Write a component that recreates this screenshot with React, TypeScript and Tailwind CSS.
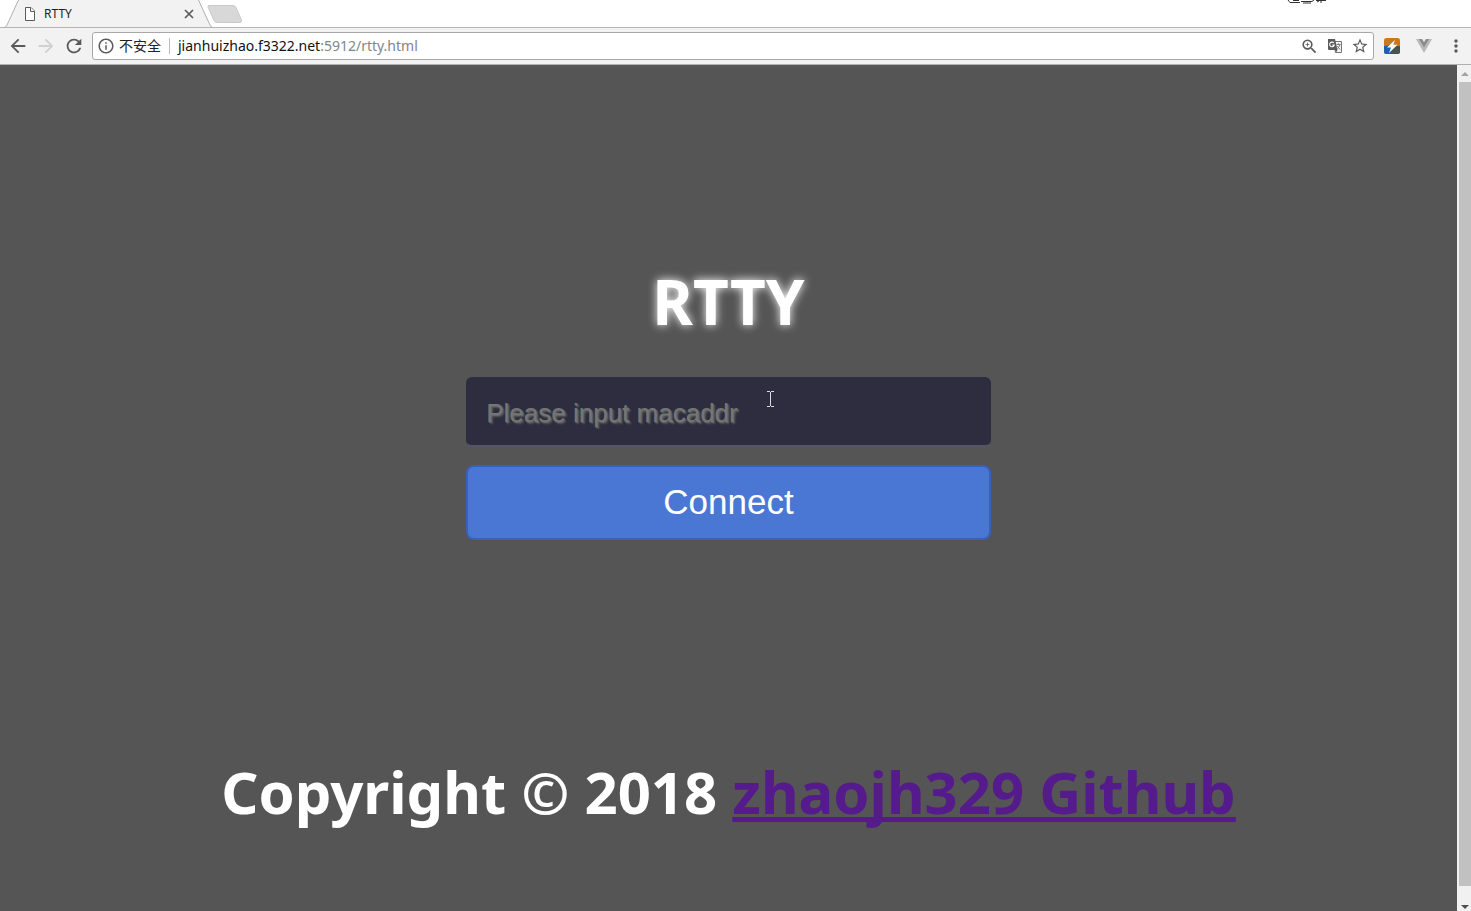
import { useState } from "react";
import {
  MdArrowBack,
  MdArrowForward,
  MdInfoOutline,
  MdMoreVert,
  MdRefresh,
  MdStarBorder,
  MdZoomIn,
} from "react-icons/md";

function TabStrip() {
  return (
    <div className="relative flex h-7 items-end overflow-hidden border-b border-[#b6b4b6] bg-white pl-1">
      {/* active tab, sits over the strip's bottom border */}
      <div className="-mb-px flex h-7">
        <svg className="h-7 w-4" viewBox="0 0 16 28">
          <path d="M0 28V27.500Q2 27 3 25L14 1L16 0V28Z" fill="#f2f2f2" />
          <path d="M0 27.500Q2 27 3 25L14 1L16 -1" fill="none" stroke="#b0b0b0" />
        </svg>
        <div className="flex w-[177px] items-center bg-[#f2f2f2] pl-1 text-xs text-[#222]">
          <svg className="mr-2 h-4 w-3" viewBox="0 0 12 16" fill="#fff" stroke="#5a5a5a">
            <path d="M1.500 1.500H7L10.500 5V14.500H1.500Z" />
            <path d="M6.500 1.500V5.500H10.500" />
          </svg>
          <span className="flex-1">RTTY</span>
          <button type="button" aria-label="Close tab" className="mr-0.5">
            <svg className="size-3" viewBox="0 0 12 12" stroke="#5a5a5a" strokeWidth="1.700">
              <path d="M2 2L10 10M10 2L2 10" />
            </svg>
          </button>
        </div>
        <svg className="h-7 w-4" viewBox="0 0 16 28">
          <path d="M0 0H2L13 25Q14 27.500 16 27.500V28H0Z" fill="#f2f2f2" />
          <path d="M1 -1L13 25Q14 27.500 16 27.500" fill="none" stroke="#b0b0b0" />
        </svg>
      </div>
      <button type="button" aria-label="New tab" className="-ml-1.5 mb-[3px]">
        <svg className="h-5 w-9" viewBox="0 0 36 20">
          <path d="M2 1.500H26Q28 1.500 29 3.500L34.500 16Q35 18.500 33 18.500H10Q8 18.500 7 16.500L1 3Q0.500 1.500 2 1.500Z" fill="#d8d8d8" stroke="#cacaca" />
        </svg>
      </button>
      {/* clipped window badge at the top edge */}
      <svg className="absolute top-0 right-36 h-1 w-10" viewBox="0 0 40 4" fill="none" stroke="#333">
        <path d="M1 0L3 2.500H13M6 0.500H12M14 1.500H25L27 0M16 3H24M29 0.500H39M34 0V3M30 2L32 1" />
      </svg>
    </div>
  );
}

function TranslateIcon() {
  return (
    <svg className="size-4" viewBox="0 0 16 16">
      <path d="M7 3.500H14.500V14.500H8.500Z" fill="#f4f4f4" stroke="#777" />
      <path d="M1 1H8L10.500 12H2Q1 12 1 11Z" fill="#5a5a5a" />
      <path d="M6.800 5A2.300 2.300 0 1 0 7.200 7H5.200" fill="none" stroke="#fff" strokeWidth="1.100" />
      <path d="M9.500 6.500H13.500M11.500 5.500V6.500M13 6.500Q12.500 9 10.500 10.500M10.300 8L13 11.500" fill="none" stroke="#777" />
      <path d="M8 12H10.500L9 14.500Z" fill="#5a5a5a" />
    </svg>
  );
}

function BoltIcon() {
  return (
    <svg className="size-4" viewBox="0 0 16 16">
      <rect width="16" height="16" rx="2.500" fill="#c77a1c" />
      <path d="M0 8L8 7V16H2.500Q0 16 0 13.500Z" fill="#1f5eb0" />
      <path d="M8 8H16V13.500Q16 16 13.500 16H7Z" fill="#44544f" />
      <path d="M11 2L3 9.500H7L5 15L13.500 6.800H9.300Z" fill="#fff" />
    </svg>
  );
}

function VueIcon() {
  return (
    <svg className="h-4 w-4" viewBox="0 0 16 16">
      <path d="M0 1H3.500L8 8.500L12.500 1H16L8 15Z" fill="#b9b9b9" />
      <path d="M3 1H6L8 4L10 1H13L8 9.500Z" fill="#8c8c8c" />
    </svg>
  );
}

function Toolbar() {
  return (
    <div className="flex h-[37px] items-center border-b border-[#b0b0b0] bg-[#f2f2f2] pr-[5px] pl-[7px] text-[#5a5a5a]">
      <button type="button" aria-label="Back">
        <MdArrowBack className="size-[22px]" />
      </button>
      <button type="button" aria-label="Forward" className="ml-1.5 text-[#d0d0d0]">
        <MdArrowForward className="size-[22px]" />
      </button>
      <button type="button" aria-label="Reload" className="ml-1.5">
        <MdRefresh className="size-[22px]" />
      </button>
      <div className="ml-[7px] flex h-7 flex-1 items-center rounded-[3px] border border-[#a8a8a8] bg-white px-1">
        <MdInfoOutline className="size-[18px]" />
        <span className="ml-1 text-sm text-[#222]">不安全</span>
        <span className="mx-2 h-4 w-px bg-[#bbb]" />
        <span className="flex-1 text-sm text-[#111]">
          jianhuizhao.f3322.net<span className="text-[#80868b]">:5912/rtty.html</span>
        </span>
        <div className="flex items-center gap-2">
          <button type="button" aria-label="Zoom">
            <MdZoomIn className="size-[19px]" />
          </button>
          <button type="button" aria-label="Translate this page">
            <TranslateIcon />
          </button>
          <button type="button" aria-label="Bookmark this page">
            <MdStarBorder className="size-[18px]" />
          </button>
        </div>
      </div>
      <button type="button" aria-label="Bolt extension" className="ml-2.5">
        <BoltIcon />
      </button>
      <button type="button" aria-label="Vue devtools" className="ml-4">
        <VueIcon />
      </button>
      <button type="button" aria-label="Menu" className="ml-3.5">
        <MdMoreVert className="size-5" />
      </button>
    </div>
  );
}

function Scrollbar() {
  return (
    <div className="flex w-3.5 flex-col items-center bg-[#f1f1f1]">
      <svg className="h-[17px] w-3.5" viewBox="0 0 14 17">
        <path d="M4 11H12L8 7Z" fill="#a3a3a3" />
      </svg>
      <div className="ml-0.5 w-3 flex-1 bg-[#c1c1c1]" />
      <svg className="h-[25px] w-3.5" viewBox="0 0 14 25">
        <path d="M4 19H12L8 23Z" fill="#505050" />
      </svg>
    </div>
  );
}

function IBeam() {
  return (
    <svg className="pointer-events-none absolute top-3.5 left-[301px] h-4 w-[7px]" viewBox="0 0 7 16" fill="none" stroke="#ddd">
      <path d="M0 0.500H3M4 0.500H7M3.500 1V15M0 15.500H3M4 15.500H7" />
    </svg>
  );
}

export default function App() {
  const [mac, setMac] = useState("");

  return (
    <div className="flex h-screen flex-col font-['Noto_Sans','Noto_Sans_CJK_SC',sans-serif]">
      <header>
        <TabStrip />
        <Toolbar />
      </header>

      <div className="flex min-h-0 flex-1">
        <main className="flex min-w-0 flex-1 flex-col items-center overflow-hidden bg-[#555] pt-[196px] text-white">
          <h1 className="text-[62px] leading-[80px] font-bold [text-shadow:0_0_10px_#fff]">RTTY</h1>

          <form
            className="mt-9 flex w-[36%] flex-col gap-[18px] font-['Liberation_Sans',sans-serif]"
            onSubmit={(e) => e.preventDefault()}
          >
            <div className="relative">
              <input
                type="text"
                aria-label="macaddr"
                placeholder="Please input macaddr"
                value={mac}
                onChange={(e) => setMac(e.target.value)}
                className="block h-[70px] w-full rounded-md border-b-2 border-[#56536a] bg-[#2d2d3f] px-5 pt-1 text-[26px] outline-none [text-shadow:1px_1px_1px_#6a6a6a,2px_2px_2px_#555] placeholder:text-[#757575]"
              />
              <IBeam />
            </div>
            <button
              type="submit"
              className="h-[75px] rounded-lg border-2 border-[#3762bc] bg-[#4a77d4] text-[35px]"
            >
              Connect
            </button>
          </form>

          <footer className="mt-[212px] text-[58px] leading-[80px] font-bold whitespace-nowrap">
            Copyright © 2018{" "}
            <a
              href="https://github.com/zhaojh329"
              className="text-[#551a8b] underline decoration-[5px] [text-decoration-skip-ink:none]"
            >
              zhaojh329 Github
            </a>
          </footer>
        </main>
        <Scrollbar />
      </div>
    </div>
  );
}
